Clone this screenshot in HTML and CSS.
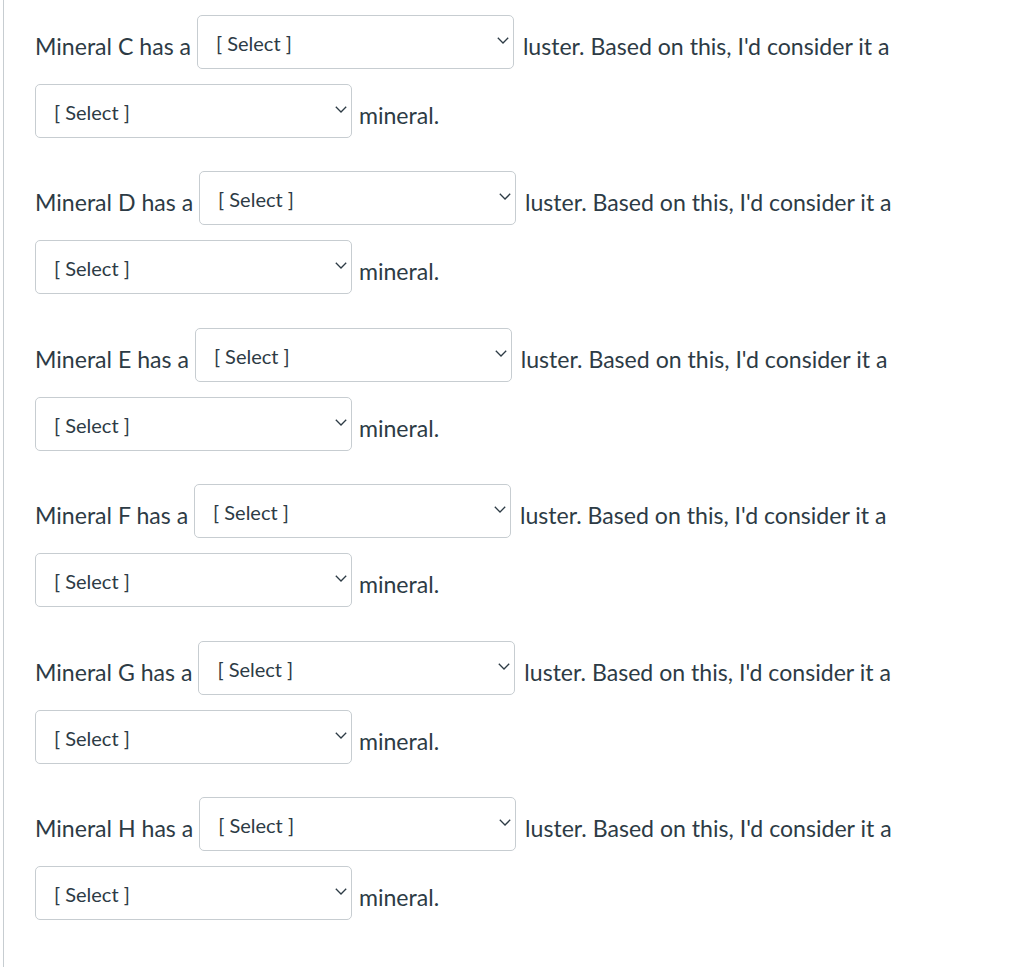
FILE: index.html
```html
<!DOCTYPE html>
<html lang="en">
<head>
<meta charset="utf-8">
<title>Minerals</title>
<link rel="stylesheet" href="styles.css">
</head>
<body>
<div class="page">
  <p class="q">Mineral C has a <span class="sel sel-first"><select><option>[ Select ]</option></select><svg class="chev" viewBox="0 0 12 7"><path d="M0.8 0.8L6 6l5.2-5.2"/></svg></span> luster. Based on this, I'd consider it a <span class="sel"><select><option>[ Select ]</option></select><svg class="chev" viewBox="0 0 12 7"><path d="M0.8 0.8L6 6l5.2-5.2"/></svg></span> mineral.</p>
  <p class="q">Mineral D has a <span class="sel sel-first"><select><option>[ Select ]</option></select><svg class="chev" viewBox="0 0 12 7"><path d="M0.8 0.8L6 6l5.2-5.2"/></svg></span> luster. Based on this, I'd consider it a <span class="sel"><select><option>[ Select ]</option></select><svg class="chev" viewBox="0 0 12 7"><path d="M0.8 0.8L6 6l5.2-5.2"/></svg></span> mineral.</p>
  <p class="q">Mineral E has a <span class="sel sel-first"><select><option>[ Select ]</option></select><svg class="chev" viewBox="0 0 12 7"><path d="M0.8 0.8L6 6l5.2-5.2"/></svg></span> luster. Based on this, I'd consider it a <span class="sel"><select><option>[ Select ]</option></select><svg class="chev" viewBox="0 0 12 7"><path d="M0.8 0.8L6 6l5.2-5.2"/></svg></span> mineral.</p>
  <p class="q">Mineral F has a <span class="sel sel-first"><select><option>[ Select ]</option></select><svg class="chev" viewBox="0 0 12 7"><path d="M0.8 0.8L6 6l5.2-5.2"/></svg></span> luster. Based on this, I'd consider it a <span class="sel"><select><option>[ Select ]</option></select><svg class="chev" viewBox="0 0 12 7"><path d="M0.8 0.8L6 6l5.2-5.2"/></svg></span> mineral.</p>
  <p class="q">Mineral G has a <span class="sel sel-first"><select><option>[ Select ]</option></select><svg class="chev" viewBox="0 0 12 7"><path d="M0.8 0.8L6 6l5.2-5.2"/></svg></span> luster. Based on this, I'd consider it a <span class="sel"><select><option>[ Select ]</option></select><svg class="chev" viewBox="0 0 12 7"><path d="M0.8 0.8L6 6l5.2-5.2"/></svg></span> mineral.</p>
  <p class="q">Mineral H has a <span class="sel sel-first"><select><option>[ Select ]</option></select><svg class="chev" viewBox="0 0 12 7"><path d="M0.8 0.8L6 6l5.2-5.2"/></svg></span> luster. Based on this, I'd consider it a <span class="sel"><select><option>[ Select ]</option></select><svg class="chev" viewBox="0 0 12 7"><path d="M0.8 0.8L6 6l5.2-5.2"/></svg></span> mineral.</p>
</div>
</body>
</html>
```

FILE: styles.css
```css
html, body {
  margin: 0;
  padding: 0;
  background: #ffffff;
}

body {
  font-family: Lato, "Liberation Sans", sans-serif;
  color: #2d3b45;
}

.page {
  margin-left: 3px;
  border-left: 1px solid #c7cdd1;
  padding: 12px 0 0 31px;
  min-height: 967px;
  box-sizing: border-box;
  width: 980px;
}

.q {
  margin: 0 0 18.4px 0;
  font-size: 23.1px;
  line-height: 69px;
}

.sel {
  position: relative;
  display: inline-block;
  vertical-align: top;
  margin: 3px 1px 0 0;
  height: 54px;
}

.sel-first {
  margin-right: 3px;
}

.sel select {
  appearance: none;
  -webkit-appearance: none;
  display: block;
  box-sizing: border-box;
  width: 317px;
  height: 54px;
  margin: 0;
  padding: 2px 30px 0 18px;
  border: 1px solid #c7cdd1;
  border-radius: 5px;
  background: #ffffff;
  font-family: Lato, "Liberation Sans", sans-serif;
  font-size: 20px;
  color: #2d3b45;
}

.chev {
  position: absolute;
  right: 5px;
  top: 22px;
  width: 12px;
  height: 7px;
  fill: none;
  stroke: #2d3b45;
  stroke-width: 1.3;
}
```
